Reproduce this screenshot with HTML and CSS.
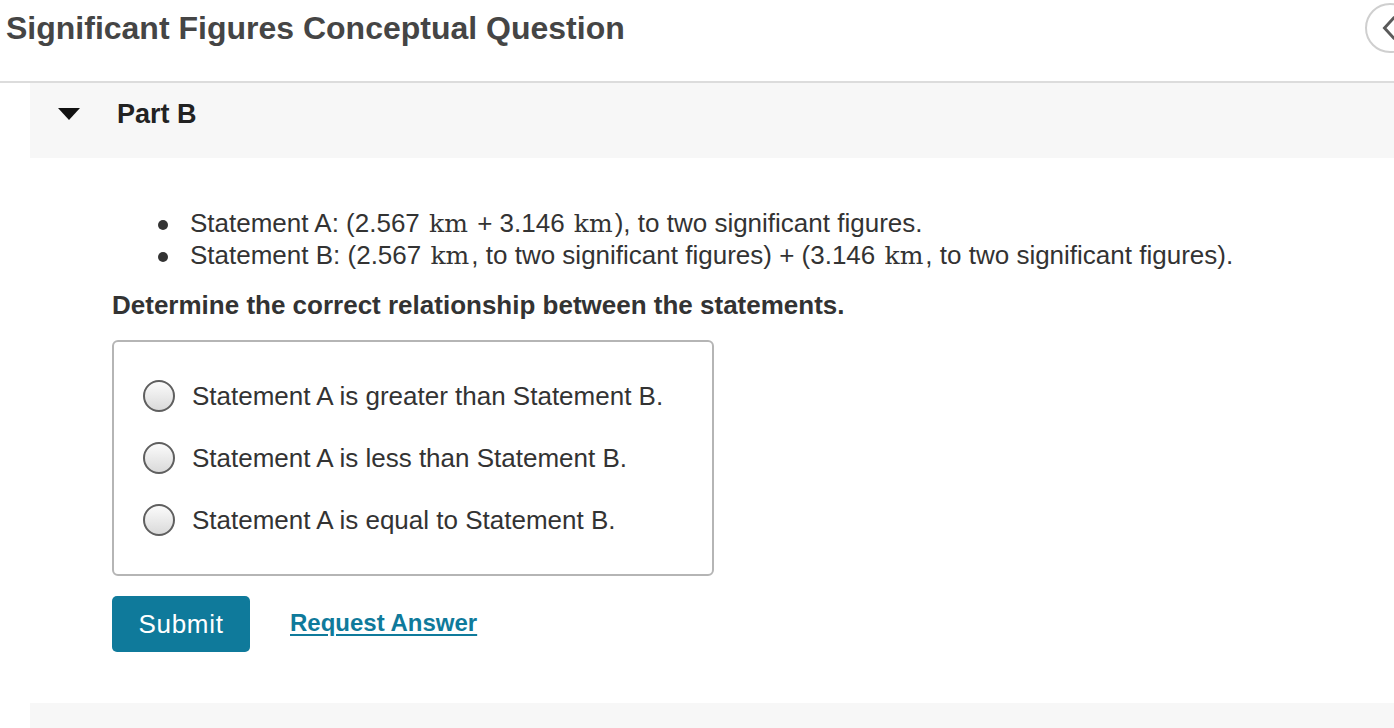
FILE: index.html
```html
<!DOCTYPE html>
<html lang="en">
<head>
<meta charset="utf-8">
<title>Significant Figures Conceptual Question</title>
<link rel="stylesheet" href="styles.css">
</head>
<body>
<header class="top-bar">
  <h1 class="page-title">Significant Figures Conceptual Question</h1>
  <button class="nav-circle" aria-label="Previous">
    <svg width="50" height="50" viewBox="0 0 50 50"><polyline points="30,13 19,25 30,37" fill="none" stroke="#5a5a5a" stroke-width="3.2" stroke-linejoin="miter"/></svg>
  </button>
</header>
<main class="part-wrap">
  <div class="part-header">
    <svg class="caret" width="22" height="12" viewBox="0 0 22 12"><polygon points="0,0 22,0 11,12" fill="#111"/></svg>
    <h2 class="part-title">Part B</h2>
  </div>
  <section class="part-body">
    <ul class="statements">
      <li>Statement A: (2.567 <span class="unit">km</span> + 3.146 <span class="unit">km</span>), to two significant figures.</li>
      <li>Statement B: (2.567 <span class="unit">km</span>, to two significant figures) + (3.146 <span class="unit">km</span>, to two significant figures).</li>
    </ul>
    <p class="prompt">Determine the correct relationship between the statements.</p>
    <div class="choices">
      <label class="choice"><span class="radio"></span><span class="choice-text">Statement A is greater than Statement B.</span></label>
      <label class="choice"><span class="radio"></span><span class="choice-text">Statement A is less than Statement B.</span></label>
      <label class="choice"><span class="radio"></span><span class="choice-text">Statement A is equal to Statement B.</span></label>
    </div>
    <div class="actions">
      <button class="submit-btn">Submit</button>
      <a class="request-link" href="#">Request Answer</a>
    </div>
  </section>
  <div class="next-part"></div>
</main>
</body>
</html>
```

FILE: styles.css
```css
* { box-sizing: border-box; }
html, body { margin: 0; padding: 0; background: #fff; }
body {
  font-family: "Liberation Sans", Arial, Helvetica, sans-serif;
  color: #333;
  overflow: hidden;
}
.top-bar {
  display: flex;
  justify-content: space-between;
  align-items: flex-start;
  height: 83px;
  border-bottom: 2px solid #dcdcdc;
  overflow: hidden;
}
.page-title {
  margin: 10px 0 0 6px;
  font-size: 32px;
  line-height: 36px;
  font-weight: bold;
  color: #454545;
}
.nav-circle {
  margin: 3px -21px 0 0;
  width: 50px;
  height: 50px;
  padding: 0;
  border: 2px solid #cfcfcf;
  border-radius: 50%;
  background: #fff;
  display: flex;
  align-items: center;
  justify-content: center;
  flex-shrink: 0;
}
.nav-circle svg { display: block; }
.part-wrap { margin-left: 30px; }
.part-header {
  display: flex;
  align-items: center;
  height: 75px;
  padding: 0 0 14px 28px;
  background: #f7f7f7;
}
.caret { display: block; margin-right: 37px; }
.part-title {
  margin: 0;
  font-size: 27px;
  line-height: 32px;
  font-weight: bold;
  color: #222;
}
.part-body { padding: 49px 0 51px 82px; }
.statements {
  list-style: none;
  margin: 0;
  padding: 0 0 0 46px;
  font-size: 26px;
  line-height: 32px;
}
.statements li {
  white-space: nowrap;
  height: 32px;
}
.statements li::before {
  content: "";
  display: inline-block;
  vertical-align: 2px;
  width: 10px;
  height: 10px;
  border-radius: 50%;
  background: #333;
  margin-right: 22px;
}
.unit {
  font-family: "DejaVu Serif", "Liberation Serif", serif;
  font-size: 25px;
  line-height: 0;
  margin: 0 2px;
}
.prompt {
  margin: 18px 0 0 0;
  font-size: 26px;
  line-height: 32px;
  font-weight: bold;
  color: #333;
}
.choices {
  margin-top: 19px;
  width: 602px;
  border: 2px solid #b5b5b5;
  border-radius: 6px;
  padding: 38px 0 38px 29px;
  display: flex;
  flex-direction: column;
  gap: 30px;
}
.choice {
  display: flex;
  align-items: center;
  height: 32px;
}
.radio {
  width: 32px;
  height: 32px;
  border-radius: 50%;
  border: 2px solid #5f5f5f;
  background: linear-gradient(#fbfbfb, #dadada);
  margin-right: 17px;
  flex-shrink: 0;
}
.choice-text {
  font-size: 26px;
  line-height: 32px;
  color: #333;
}
.actions {
  margin-top: 20px;
  display: flex;
  align-items: center;
  gap: 40px;
}
.submit-btn {
  width: 138px;
  height: 56px;
  border: none;
  border-radius: 5px;
  background: #0f7a9b;
  color: #fff;
  font-family: "Liberation Sans", Arial, Helvetica, sans-serif;
  font-size: 26px;
  letter-spacing: 0.7px;
  padding: 0;
}
.request-link {
  font-size: 24px;
  font-weight: bold;
  color: #0f7a9b;
  text-decoration: underline;
  text-underline-offset: 3px;
  margin-bottom: 2px;
}
.next-part {
  height: 40px;
  background: #f7f7f7;
}
```
